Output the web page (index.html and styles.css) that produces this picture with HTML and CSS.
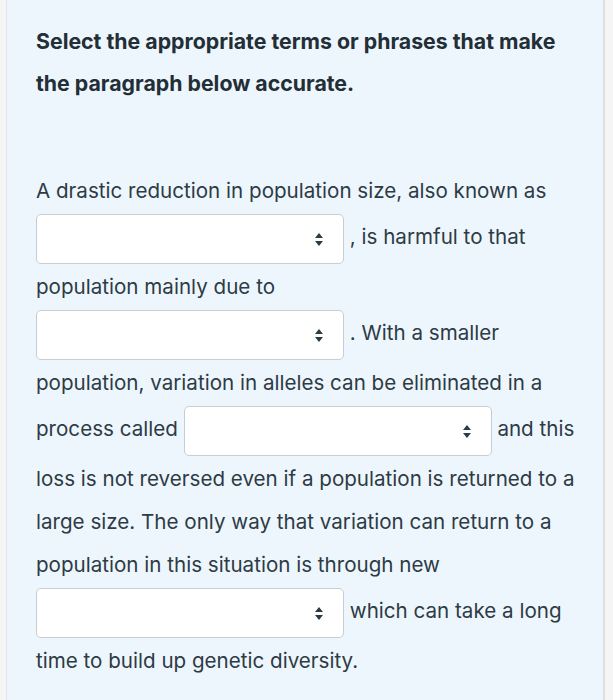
FILE: index.html
```html
<!DOCTYPE html>
<html lang="en">
<head>
<meta charset="utf-8">
<title>Question</title>
<link rel="stylesheet" href="styles.css">
</head>
<body>
<div class="page">
  <div class="panel">
    <p class="title">Select the appropriate terms or phrases that make the paragraph below accurate.</p>
    <p class="body">A drastic reduction in population size, also known as <span class="select"><svg class="arrow" viewBox="0 0 8 13" width="8" height="13"><path d="M4 0 L8 5 L0 5 Z M0 8 L8 8 L4 13 Z" fill="#2d3b45"/></svg></span> , is harmful to that population mainly due to <span class="select"><svg class="arrow" viewBox="0 0 8 13" width="8" height="13"><path d="M4 0 L8 5 L0 5 Z M0 8 L8 8 L4 13 Z" fill="#2d3b45"/></svg></span> . With a smaller population, variation in alleles can be eliminated in a process called <span class="select"><svg class="arrow" viewBox="0 0 8 13" width="8" height="13"><path d="M4 0 L8 5 L0 5 Z M0 8 L8 8 L4 13 Z" fill="#2d3b45"/></svg></span> and this loss is not reversed even if a population is returned to a large size. The only way that variation can return to a population in this situation is through new <span class="select"><svg class="arrow" viewBox="0 0 8 13" width="8" height="13"><path d="M4 0 L8 5 L0 5 Z M0 8 L8 8 L4 13 Z" fill="#2d3b45"/></svg></span> which can take a long time to build up genetic diversity.</p>
  </div>
</div>
</body>
</html>
```
FILE: styles.css
```css
html, body {
  margin: 0;
  padding: 0;
}
body {
  background: #f5f5f5;
  font-family: Inter, "Liberation Sans", Arial, sans-serif;
  color: #2d3b45;
}
.page {
  padding-left: 6px;
  width: 607px;
  height: 700px;
  overflow: hidden;
}
.panel {
  width: 567px;
  height: 700px;
  background: #eef6fd;
  border-left: 1px solid #e2e6ea;
  border-right: 2px solid #dedfe0;
  padding: 20px 0 0 29px;
}
.title {
  margin: 0;
  width: 545px;
  font-size: 21.3px;
  font-weight: 700;
  line-height: 42px;
  color: #232e36;
}
.body {
  margin: 65px 0 0 0;
  width: 548px;
  font-size: 20.6px;
  line-height: 43px;
}
.select {
  display: inline-flex;
  align-items: center;
  justify-content: flex-end;
  box-sizing: border-box;
  width: 308px;
  height: 50px;
  padding-right: 20px;
  margin: 2px 0 1px 0;
  vertical-align: middle;
  background: #ffffff;
  border: 1px solid #c7cdd1;
  border-radius: 5px;
}
.arrow {
  display: block;
}
```
